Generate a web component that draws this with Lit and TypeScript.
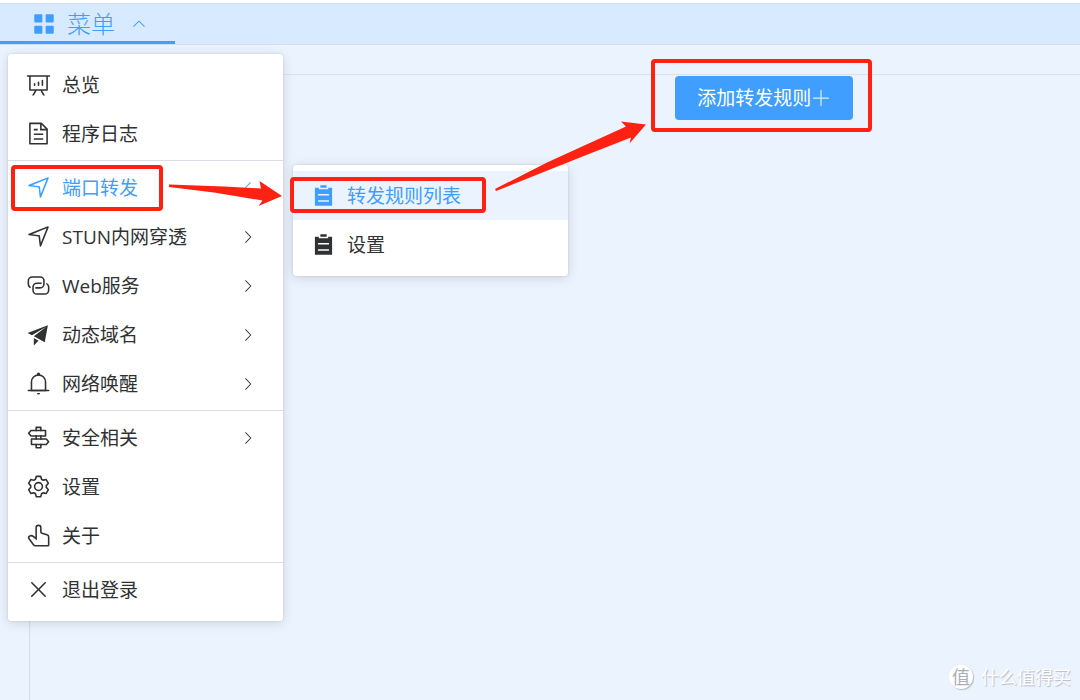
import { LitElement, html, css, svg, nothing } from "lit";
import { customElement, property } from "lit/decorators.js";
import { classMap } from "lit/directives/class-map.js";

const ICONS: Record<string, string[]> = {
  menu: ["M160 448a32 32 0 0 1-32-32V160a32 32 0 0 1 32-32h256a32 32 0 0 1 32 32v256a32 32 0 0 1-32 32H160zM608 448a32 32 0 0 1-32-32V160a32 32 0 0 1 32-32h256a32 32 0 0 1 32 32v256a32 32 0 0 1-32 32H608zM160 896a32 32 0 0 1-32-32V608a32 32 0 0 1 32-32h256a32 32 0 0 1 32 32v256a32 32 0 0 1-32 32H160zM608 896a32 32 0 0 1-32-32V608a32 32 0 0 1 32-32h256a32 32 0 0 1 32 32v256a32 32 0 0 1-32 32H608z"],
  chevron: ["M340.864 149.312a30.592 30.592 0 0 0 0 42.752L652.736 512 340.864 831.872a30.592 30.592 0 0 0 0 42.752 29.12 29.12 0 0 0 41.728 0L714.24 534.336a32 32 0 0 0 0-44.672L382.592 149.376a29.12 29.12 0 0 0-41.728 0z"],
  analysis: ["m665.216 768 110.848 192h-73.856L591.36 768H433.024L322.176 960H248.32l110.848-192H160a32 32 0 0 1-32-32V192H64a32 32 0 0 1 0-64h896a32 32 0 1 1 0 64h-64v544a32 32 0 0 1-32 32H665.216zM832 192H192v512h640V192zM352 448a32 32 0 0 1 32 32v64a32 32 0 0 1-64 0v-64a32 32 0 0 1 32-32zm160-64a32 32 0 0 1 32 32v128a32 32 0 0 1-64 0V416a32 32 0 0 1 32-32zm160-64a32 32 0 0 1 32 32v192a32 32 0 1 1-64 0V352a32 32 0 0 1 32-32z"],
  document: ["M832 384H576V128H192v768h640V384zm-26.496-64L640 154.496V320h165.504zM160 64h480l256 256v608a32 32 0 0 1-32 32H160a32 32 0 0 1-32-32V96a32 32 0 0 1 32-32zm160 448h384v64H320v-64zm0-192h160v64H320v-64zm0 384h384v64H320v-64z"],
  position: ["m249.6 417.088 319.744 43.072 39.168 310.272L845.12 178.88 249.6 417.088zm-129.024 47.168a32 32 0 0 1-7.68-61.44l777.792-311.04a32 32 0 0 1 41.6 41.6l-310.72 775.68a32 32 0 0 1-61.44-7.808L512 516.992l-391.424-52.736z"],
  connection: [
    "M640 384v64H448a128 128 0 0 0-128 128v128a128 128 0 0 0 128 128h320a128 128 0 0 0 128-128V576a128 128 0 0 0-64-110.848V394.88c74.56 26.368 128 97.472 128 181.056v128a192 192 0 0 1-192 192H448a192 192 0 0 1-192-192V576a192 192 0 0 1 192-192h192z",
    "M384 640v-64h192a128 128 0 0 0 128-128V320a128 128 0 0 0-128-128H256a128 128 0 0 0-128 128v128a128 128 0 0 0 64 110.848v70.272A192.064 192.064 0 0 1 64 448V320a192 192 0 0 1 192-192h320a192 192 0 0 1 192 192v128a192 192 0 0 1-192 192H384z",
  ],
  promotion: ["m64 448 832-320-128 704-446.08-243.328L832 192 242.816 545.472 64 448zm256 512V657.024L512 768 320 960z"],
  bell: [
    "M512 64a64 64 0 0 1 64 64v64H448v-64a64 64 0 0 1 64-64z",
    "M256 768h512V448a256 256 0 1 0-512 0v320zm256-640a320 320 0 0 1 320 320v384H192V448a320 320 0 0 1 320-320z",
    "M96 768h832q32 0 32 32t-32 32H96q-32 0-32-32t32-32zm352 128h128a64 64 0 0 1-128 0z",
  ],
  guide: [
    "M640 608h-64V416h64v192zm0 160v160a32 32 0 0 1-32 32H416a32 32 0 0 1-32-32V768h64v128h128V768h64zM384 608V416h64v192h-64zm256-352h-64V128H448v128h-64V96a32 32 0 0 1 32-32h192a32 32 0 0 1 32 32v160z",
    "m220.8 256-71.232 80 71.168 80H768V256H220.8zm-14.4-64H800a32 32 0 0 1 32 32v224a32 32 0 0 1-32 32H206.4a32 32 0 0 1-23.936-10.752l-99.584-112a32 32 0 0 1 0-42.496l99.584-112A32 32 0 0 1 206.4 192z",
    "M813.952 608H256v160h557.952l71.168-80-71.168-80zm14.448-64a32 32 0 0 1 23.936 10.752l99.584 112a32 32 0 0 1 0 42.496l-99.584 112A32 32 0 0 1 828.4 832H224a32 32 0 0 1-32-32V576a32 32 0 0 1 32-32h604.4z",
  ],
  setting: ["M600.704 64a32 32 0 0 1 30.464 22.208l35.2 109.376c14.784 7.232 28.928 15.36 42.432 24.512l112.384-24.192a32 32 0 0 1 34.432 15.36L944.32 364.8a32 32 0 0 1-4.032 37.504l-77.12 85.12a357.12 357.12 0 0 1 0 49.024l77.12 85.248a32 32 0 0 1 4.032 37.504l-88.704 153.6a32 32 0 0 1-34.432 15.296L708.8 803.904c-13.44 9.088-27.648 17.28-42.368 24.512l-35.264 109.376A32 32 0 0 1 600.704 960H423.296a32 32 0 0 1-30.464-22.208L357.696 828.48a351.616 351.616 0 0 1-42.56-24.64l-112.32 24.256a32 32 0 0 1-34.432-15.36L79.68 659.2a32 32 0 0 1 4.032-37.504l77.12-85.248a357.12 357.12 0 0 1 0-48.896l-77.12-85.248A32 32 0 0 1 79.68 364.8l88.704-153.6a32 32 0 0 1 34.432-15.296l112.32 24.256c13.568-9.152 27.776-17.408 42.56-24.64l35.2-109.312A32 32 0 0 1 423.232 64H600.64zm-23.424 64H446.72l-36.352 113.088-24.512 11.968a294.113 294.113 0 0 0-34.816 20.096l-22.656 15.36-116.224-25.088-65.28 113.152 79.68 88.192-1.92 27.136a293.12 293.12 0 0 0 0 40.192l1.92 27.136-79.808 88.192 65.344 113.152 116.224-25.024 22.656 15.296a294.113 294.113 0 0 0 34.816 20.096l24.512 11.968L446.72 896h130.688l36.48-113.152 24.448-11.904a288.282 288.282 0 0 0 34.752-20.096l22.592-15.296 116.288 25.024 65.28-113.152-79.744-88.192 1.92-27.136a293.12 293.12 0 0 0 0-40.256l-1.92-27.136 79.808-88.128-65.344-113.152-116.288 24.96-22.592-15.232a287.616 287.616 0 0 0-34.752-20.096l-24.448-11.904L577.344 128zM512 320a192 192 0 1 1 0 384 192 192 0 0 1 0-384zm0 64a128 128 0 1 0 0 256 128 128 0 0 0 0-256z"],
  pointer: ["M511.552 128c-35.584 0-64.384 28.8-64.384 64.448v516.48L274.048 570.88a94.272 94.272 0 0 0-112.896-3.456 44.416 44.416 0 0 0-8.96 62.208L332.8 870.4A64 64 0 0 0 384 896h512V575.232a64 64 0 0 0-45.632-61.312l-205.952-61.76A96 96 0 0 1 576 360.192V192.448C576 156.8 547.2 128 511.552 128zM359.04 556.8l24.128 19.2V192.448a128.448 128.448 0 1 1 256.832 0v167.744a32 32 0 0 0 22.784 30.656l206.016 61.76A128 128 0 0 1 960 575.232V896a64 64 0 0 1-64 64H384a128 128 0 0 1-102.4-51.2L101.056 668.032A108.416 108.416 0 0 1 128 512.512a158.272 158.272 0 0 1 185.984 8.32L359.04 556.8z"],
  close: ["M764.288 214.592 512 466.88 259.712 214.592a31.936 31.936 0 0 0-45.12 45.12L466.752 512 214.528 764.224a31.936 31.936 0 1 0 45.12 45.184L512 557.184l252.288 252.288a31.936 31.936 0 0 0 45.12-45.12L557.12 512.064l252.288-252.352a31.936 31.936 0 1 0-45.12-45.184z"],
  list: ["M704 192h160v736H160V192h160v64h384v-64zM288 512h448v-64H288v64zm0 256h448v-64H288v64zm96-576V96h256v96H384z"],
  plus: ["M480 480V128a32 32 0 0 1 64 0v352h352a32 32 0 1 1 0 64H544v352a32 32 0 1 1-64 0V544H128a32 32 0 0 1 0-64h352z"],
};

interface Entry {
  label: string;
  icon: string;
  active?: boolean;
  children?: Entry[];
  expandable?: boolean;
}

const GROUPS: Entry[][] = [
  [
    { label: "总览", icon: "analysis" },
    { label: "程序日志", icon: "document" },
  ],
  [
    {
      label: "端口转发",
      icon: "position",
      active: true,
      expandable: true,
      children: [
        { label: "转发规则列表", icon: "list", active: true },
        { label: "设置", icon: "list" },
      ],
    },
    { label: "STUN内网穿透", icon: "position", expandable: true },
    { label: "Web服务", icon: "connection", expandable: true },
    { label: "动态域名", icon: "promotion", expandable: true },
    { label: "网络唤醒", icon: "bell", expandable: true },
  ],
  [
    { label: "安全相关", icon: "guide", expandable: true },
    { label: "设置", icon: "setting" },
    { label: "关于", icon: "pointer" },
  ],
  [{ label: "退出登录", icon: "close" }],
];

@customElement("ui-icon")
export class UiIcon extends LitElement {
  @property() name = "";

  static styles = css`
    :host {
      display: inline-flex;
      flex: none;
      width: 25px;
      height: 25px;
    }
    .glyph {
      display: block;
      width: 100%;
      height: 100%;
      fill: currentColor;
    }
  `;

  render() {
    return html`<svg class="glyph" viewBox="0 0 1024 1024" aria-hidden="true">
      ${(ICONS[this.name] ?? []).map((d) => svg`<path d=${d}></path>`)}
    </svg>`;
  }
}

@customElement("menu-panel")
export class MenuPanel extends LitElement {
  @property({ attribute: false }) groups: Entry[][] = [];

  static styles = css`
    :host {
      display: block;
      box-sizing: border-box;
      width: 275px;
      padding: 6px 0 7px;
      background: #fff;
      border-radius: 3px;
      box-shadow: 0 0 2px rgba(0, 0, 0, 0.16), 0 2px 12px rgba(0, 0, 0, 0.13);
    }
    .group {
      margin: 0;
      padding: 0;
      list-style: none;
    }
    .group + .group {
      margin-top: 2px;
      padding-top: 2px;
      border-top: 1px solid #d9dde5;
    }
    .row {
      position: relative;
    }
    .item {
      display: flex;
      align-items: center;
      gap: 11px;
      width: 100%;
      height: 49px;
      padding: 0 27px 0 18px;
      border: 0;
      background: none;
      color: #303133;
      font: inherit;
      text-align: left;
      white-space: nowrap;
      cursor: pointer;
    }
    .item.active {
      color: #409eff;
    }
    .item.leaf.active {
      background: #ebf3ff;
    }
    .label {
      flex: 1;
    }
    .caret {
      width: 16px;
      height: 16px;
    }
    .active .caret {
      transform: rotate(180deg);
    }
    .sub {
      position: absolute;
      top: 2px;
      left: calc(100% + 10px);
    }
  `;

  private row(entry: Entry): unknown {
    const classes = { item: true, active: !!entry.active, leaf: !entry.expandable };
    return html`<li class="row">
      <button class=${classMap(classes)} type="button">
        <ui-icon name=${entry.icon}></ui-icon>
        <span class="label">${entry.label}</span>
        ${entry.expandable ? html`<ui-icon class="caret" name="chevron"></ui-icon>` : nothing}
      </button>
      ${entry.children
        ? html`<menu-panel class="sub" .groups=${[entry.children]}></menu-panel>`
        : nothing}
    </li>`;
  }

  render() {
    return this.groups.map(
      (group) => html`<ul class="group">${group.map((entry) => this.row(entry))}</ul>`
    );
  }
}

@customElement("app-root")
export class AppRoot extends LitElement {
  static styles = css`
    :host {
      position: relative;
      display: flex;
      flex-direction: column;
      min-height: 100vh;
      overflow: hidden;
      background: #ebf3ff;
      color: #303133;
      font: 400 19px/28px "Open Sans", "Noto Sans CJK SC", sans-serif;
    }
    .bar {
      position: relative;
      z-index: 1;
      display: flex;
      height: 41px;
      border-top: 3px solid #fff;
      border-bottom: 1px solid #d5dfec;
      background: #d8eaff;
      box-shadow: inset 0 1px 0 #d8dde3;
    }
    .tab {
      display: flex;
      align-items: center;
      gap: 10px;
      padding: 3px 28px 0 31px;
      border: 0;
      border-bottom: 3px solid #409eff;
      background: none;
      color: #409eff;
      font: inherit;
      font-size: 24px;
      font-weight: 300;
      cursor: pointer;
    }
    .grid {
      width: 26px;
      height: 26px;
    }
    .fold {
      width: 16px;
      height: 16px;
      margin-left: 6px;
      transform: rotate(-90deg);
    }
    .popup {
      position: absolute;
      top: 51px;
      left: 8px;
    }
    .content {
      flex: 1;
      display: grid;
      grid-template-columns: 74fr auto 26fr;
      align-items: start;
      margin: 29px 0 0 29px;
      padding-top: 1px;
      border-top: 1px solid #dce1e9;
      border-left: 1px solid #d5dce6;
    }
    .add {
      grid-column: 2;
      display: flex;
      align-items: center;
      height: 44px;
      padding: 0 22px;
      border: 0;
      border-radius: 4px;
      background: #409eff;
      color: #fff;
      font: inherit;
      cursor: pointer;
    }
    .add-icon {
      width: 20px;
      height: 20px;
      opacity: 0.8;
    }
    .notes {
      position: absolute;
      z-index: 2;
      top: 0;
      left: 0;
      width: 1080px;
      height: 700px;
      pointer-events: none;
    }
    .frame {
      fill: none;
      stroke: #ff2112;
      stroke-width: 4;
    }
    .arrow {
      fill: #ff2112;
    }
    .mark {
      position: absolute;
      right: 9px;
      bottom: 9px;
      display: flex;
      align-items: center;
      gap: 8px;
      color: #fff;
      font-size: 18px;
      text-shadow: 1px 1px 1px #b4bbc6;
    }
    .seal {
      width: 24px;
      height: 24px;
      border-radius: 50%;
      background: #fff;
      box-shadow: 1px 1px 1px #b5bcc6;
      color: #a9afb9;
      line-height: 24px;
      text-align: center;
      text-shadow: none;
    }
  `;

  render() {
    return html`
      <nav class="bar">
        <button class="tab" type="button" aria-expanded="true">
          <ui-icon class="grid" name="menu"></ui-icon>
          <span>菜单</span>
          <ui-icon class="fold" name="chevron"></ui-icon>
        </button>
        <menu-panel class="popup" .groups=${GROUPS}></menu-panel>
      </nav>
      <main class="content">
        <button class="add" type="button">
          <span>添加转发规则</span><ui-icon class="add-icon" name="plus"></ui-icon>
        </button>
      </main>
      <svg class="notes" viewBox="0 0 1080 700" aria-hidden="true">
        <rect class="frame" x="13" y="167" width="148" height="42" rx="2"></rect>
        <rect class="frame" x="292" y="179" width="192" height="32" rx="2"></rect>
        <rect class="frame" x="653" y="61" width="217" height="69" rx="2"></rect>
        <path class="arrow" d="M169 184.500L224 186.500L261 188.500L259.500 181L282 196L258.500 206L262.500 200.500L214 192.500L169 187Z"></path>
        <path class="arrow" d="M495 189L547 162.500L626 126.500L621 121.500L646 124.500L629.500 143.500L631 137.500L580 157.500L496 191Z"></path>
      </svg>
      <div class="mark"><span class="seal">值</span><span>什么值得买</span></div>
    `;
  }
}
